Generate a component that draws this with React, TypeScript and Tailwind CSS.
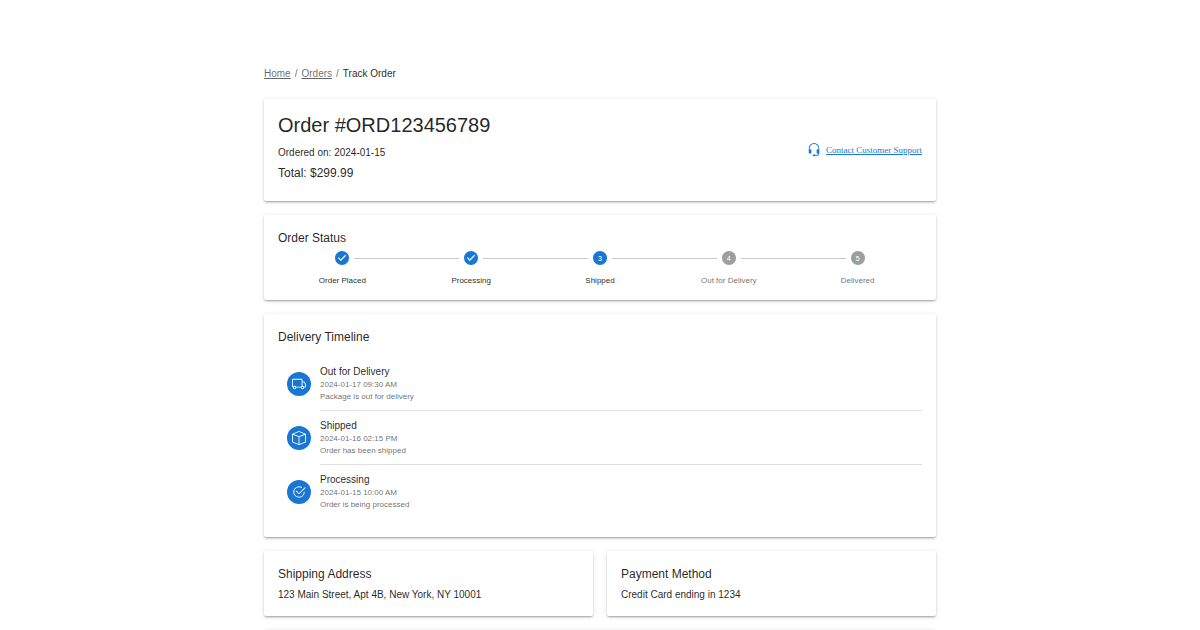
import type { ReactNode } from "react";
import clsx from "clsx";
import type { IconType } from "react-icons";
import { BsBox, BsCheck2Circle, BsHeadset, BsTruck } from "react-icons/bs";

interface TimelineEvent {
  status: string;
  time: string;
  description: string;
  icon: IconType;
}

const order = {
  id: "ORD123456789",
  date: "2024-01-15",
  total: "$299.99",
  address: "123 Main Street, Apt 4B, New York, NY 10001",
  payment: "Credit Card ending in 1234",
};

const steps = [
  "Order Placed",
  "Processing",
  "Shipped",
  "Out for Delivery",
  "Delivered",
];
const activeStep = 2;

const timeline: TimelineEvent[] = [
  {
    status: "Out for Delivery",
    time: "2024-01-17 09:30 AM",
    description: "Package is out for delivery",
    icon: BsTruck,
  },
  {
    status: "Shipped",
    time: "2024-01-16 02:15 PM",
    description: "Order has been shipped",
    icon: BsBox,
  },
  {
    status: "Processing",
    time: "2024-01-15 10:00 AM",
    description: "Order is being processed",
    icon: BsCheck2Circle,
  },
];

interface CardProps {
  title?: string;
  className?: string;
  children?: ReactNode;
}

const Card = ({ title, className, children }: CardProps) => (
  <section
    className={clsx(
      "rounded-xs bg-white p-3.5 shadow-[0_2px_2px_-1px_rgba(0,0,0,0.2),0_1px_2px_0_rgba(0,0,0,0.14),0_1px_5px_0_rgba(0,0,0,0.12)]",
      className
    )}
  >
    {title && <h2 className="text-[12px] leading-[19px]">{title}</h2>}
    {children}
  </section>
);

const Breadcrumbs = () => (
  <nav aria-label="breadcrumb">
    <ol className="flex gap-1 text-black/60">
      <li>
        <a href="#home" className="underline">
          Home
        </a>
      </li>
      <li aria-hidden="true">/</li>
      <li>
        <a href="#orders" className="underline">
          Orders
        </a>
      </li>
      <li aria-hidden="true">/</li>
      <li className="text-black/87">Track Order</li>
    </ol>
  </nav>
);

const Stepper = () => (
  <ol className="mt-[3px] flex">
    {steps.map((label, index) => {
      const reached = index <= activeStep;
      return (
        <li key={label} className="flex-1 text-center">
          <div className="flex items-center gap-[5px]">
            <span className={clsx("h-px flex-1", index > 0 && "bg-[#c8c8c8]")} />
            <span
              className={clsx(
                "flex size-3.5 items-center justify-center rounded-full text-[7px] leading-none text-white",
                reached ? "bg-[#1976d2]" : "bg-[#9e9e9e]"
              )}
            >
              {index < activeStep ? (
                <svg viewBox="0 0 24 24" className="size-3.5" fill="white">
                  <path d="M10 17l-5-5 1.4-1.4 3.6 3.6 7.6-7.6L19 8l-9 9z" />
                </svg>
              ) : (
                index + 1
              )}
            </span>
            <span
              className={clsx(
                "h-px flex-1",
                index < steps.length - 1 && "bg-[#c8c8c8]"
              )}
            />
          </div>
          <div
            className={clsx(
              "mt-[11px] text-[8px] leading-[10px]",
              reached ? "text-black/87" : "text-black/60"
            )}
          >
            {label}
          </div>
        </li>
      );
    })}
  </ol>
);

const TimelineRow = ({ event }: { event: TimelineEvent }) => {
  const Icon = event.icon;

  return (
    <li className="group flex">
      <div className="flex w-[42px] items-center pl-[9px]">
        <span className="flex size-6 items-center justify-center rounded-full bg-[#1976d2] text-white">
          <Icon className="size-3.5" />
        </span>
      </div>
      <div className="flex-1 border-b border-black/12 pt-2 pb-[7px] group-last:border-transparent">
        <h3>{event.status}</h3>
        <div className="text-[8px] leading-3 text-black/60">
          <p>{event.time}</p>
          <p>{event.description}</p>
        </div>
      </div>
    </li>
  );
};

const App = () => {
  return (
    <main className="mx-auto flex w-full max-w-2xl flex-col gap-3.5 pt-[67px] font-['Liberation_Sans',Arial,sans-serif] text-[10px] leading-[14px] text-black/87">
      <div className="pb-1">
        <Breadcrumbs />
      </div>

      <Card className="flex items-center justify-between">
        <div>
          <h1 className="text-[20px] leading-6">Order #{order.id}</h1>
          <p className="mt-[9px]">Ordered on: {order.date}</p>
          <p className="mt-1 mb-1 text-[12px] leading-[19px]">
            Total: {order.total}
          </p>
        </div>
        <a
          href="#support"
          className="flex items-center gap-[5px] font-['Liberation_Serif',serif] text-[9px] text-[#1976d2] underline"
        >
          <BsHeadset className="size-3.5" />
          Contact Customer Support
        </a>
      </Card>

      <Card title="Order Status">
        <Stepper />
      </Card>

      <Card title="Delivery Timeline">
        <ul className="mt-[5px] pt-[5px] pb-1">
          {timeline.map((event) => (
            <TimelineRow key={event.status} event={event} />
          ))}
        </ul>
      </Card>

      <div className="grid grid-cols-2 gap-3.5">
        <Card title="Shipping Address">
          <p className="mt-1">{order.address}</p>
        </Card>
        <Card title="Payment Method">
          <p className="mt-1">{order.payment}</p>
        </Card>
      </div>

      <Card />
    </main>
  );
};

export default App;
